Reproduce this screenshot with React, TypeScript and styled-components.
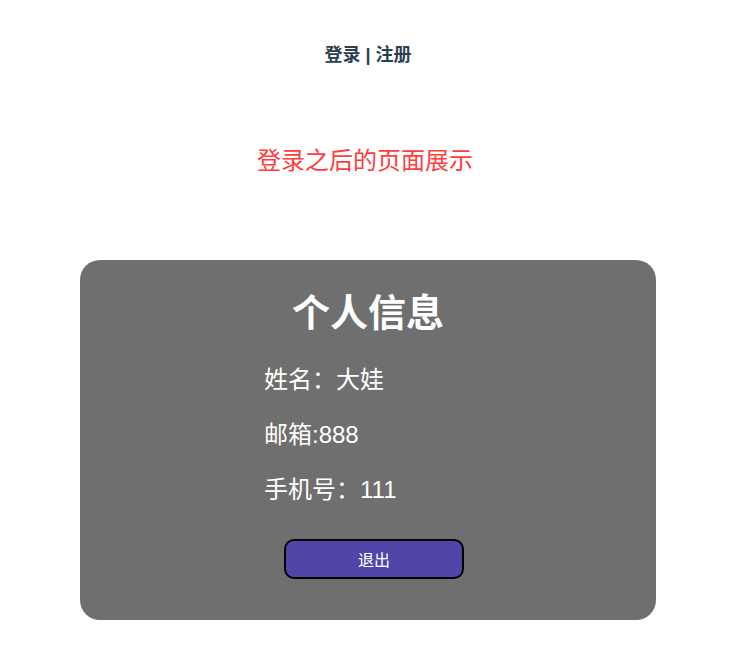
import styled, { createGlobalStyle } from "styled-components";

const GlobalStyle = createGlobalStyle`
  body {
    margin: 0;
    background: #ffffff;
    font-family: Arial, "Liberation Sans", "Noto Sans CJK SC", sans-serif;
  }
  #root {
    width: 736px;
  }
`;

const Page = styled.div`
  text-align: center;
  color: #2c3e50;
`;

const Nav = styled.nav`
  padding-top: 43px;
  height: 24px;
  font-size: 18px;
  line-height: 24px;
  font-weight: bold;
  color: #2c3e50;
`;

const NavLink = styled.a`
  color: #2c3e50;
  text-decoration: none;
  cursor: pointer;
`;

const Notice = styled.div`
  margin-top: 79px;
  padding-right: 6px;
  font-size: 24px;
  line-height: 30px;
  color: #ff3d3d;
`;

const Card = styled.div`
  width: 576px;
  height: 360px;
  margin: 84px auto 0;
  box-sizing: border-box;
  padding-top: 30px;
  background: #6f6f6f;
  border-radius: 20px;
  color: #ffffff;
`;

const Title = styled.h1`
  margin: 0;
  font-size: 38px;
  line-height: 46px;
  font-weight: bold;
`;

const InfoList = styled.div`
  width: 208px;
  margin: 16px auto 0;
  text-align: left;
  white-space: nowrap;
`;

const InfoRow = styled.div`
  font-size: 24px;
  line-height: 55px;
`;

const LogoutButton = styled.button`
  display: block;
  width: 180px;
  height: 40px;
  margin: 22px 0 0 20px;
  background: #5045a9;
  border: 2px solid #000000;
  border-radius: 10px;
  color: #ffffff;
  font-size: 16px;
  font-family: inherit;
  cursor: pointer;
`;

function App() {
  return (
    <Page>
      <GlobalStyle />
      <Nav>
        <NavLink>登录</NavLink> | <NavLink>注册</NavLink>
      </Nav>
      <Notice>登录之后的页面展示</Notice>
      <Card>
        <Title>个人信息</Title>
        <InfoList>
          <InfoRow>姓名：大娃</InfoRow>
          <InfoRow>邮箱:888</InfoRow>
          <InfoRow>手机号：111</InfoRow>
          <LogoutButton>退出</LogoutButton>
        </InfoList>
      </Card>
    </Page>
  );
}

export default App;
